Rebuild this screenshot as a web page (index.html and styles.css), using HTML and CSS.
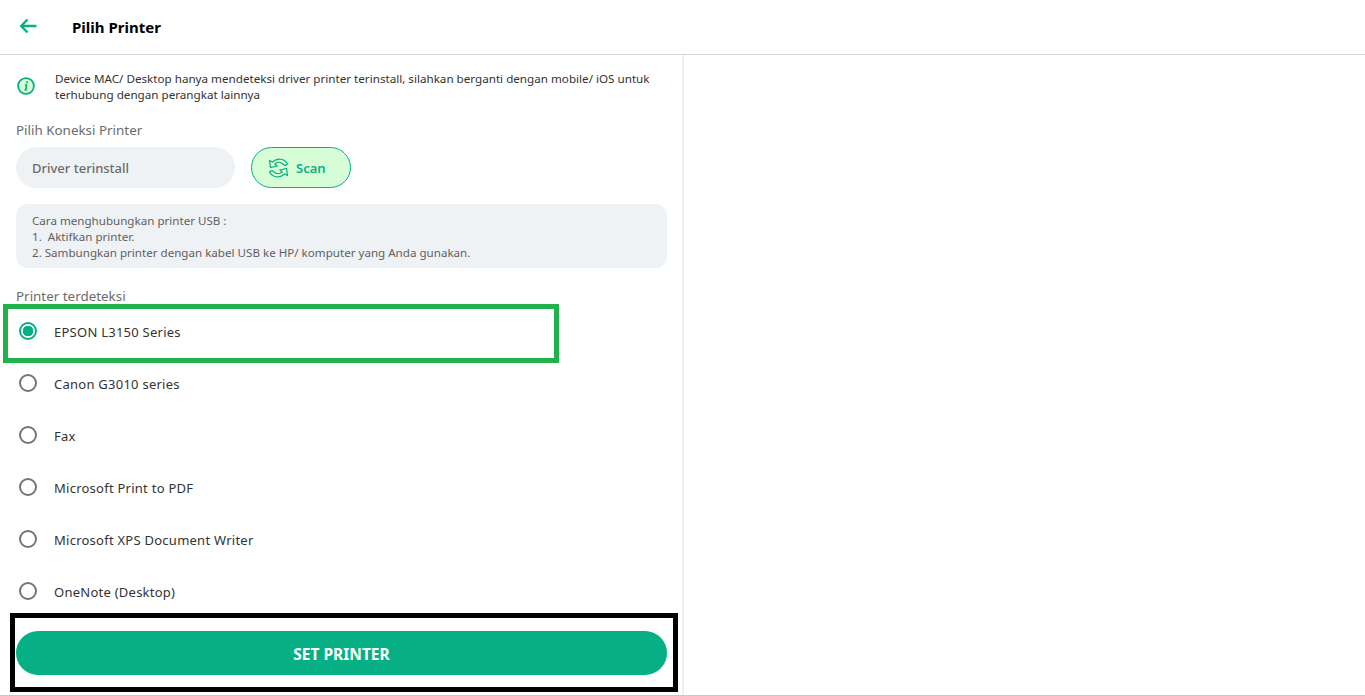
FILE: index.html
```html
<!DOCTYPE html>
<html lang="en">
<head>
  <meta charset="UTF-8" />
  <meta name="viewport" content="width=device-width, initial-scale=1.0"/>
  <title>Pilih Printer</title>
  <link rel="stylesheet" href="styles.css">
</head>
<body>
  <header class="topbar">
    <svg class="back-icon" width="18" height="16" viewBox="0 0 18 16" fill="none" stroke="#06b084" stroke-width="2.4">
      <path d="M17.5 8H2.5M8.5 1.5L2.2 8l6.3 6.5"/>
    </svg>
    <h1>Pilih Printer</h1>
  </header>

  <main class="layout">
    <section class="panel">
      <!-- Notice -->
      <div class="notice">
        <svg class="info-icon" width="18" height="18" viewBox="0 0 18 18">
          <circle cx="9" cy="9" r="7.9" fill="#d6fdd6" stroke="#06b084" stroke-width="1.8"/>
          <path d="M10 4.2v2M9.6 7.8L8.6 12.8M7.9 7.8h1.7M7.6 12.8h2.2" fill="none" stroke="#06b084" stroke-width="1.7"/>
        </svg>
        <p>Device MAC/ Desktop hanya mendeteksi driver printer terinstall, silahkan berganti dengan mobile/ iOS untuk terhubung dengan perangkat lainnya</p>
      </div>

      <div class="label connection-label">Pilih Koneksi Printer</div>
      <div class="connection">
        <div class="driver-pill">Driver terinstall</div>
        <button class="scan-btn">
          <svg width="22" height="22" viewBox="1 0 21 22" fill="none" stroke="#06b084" stroke-width="1.2">
            <path d="M2 3.5L3 10.5L9.5 9L7.3 7C9.5 5 13 4.8 15.5 7L17.5 8.5L20 7C17 1.5 10 .5 5 5Z"/>
            <path d="M2 3.5L3 10.5L9.5 9L7.3 7C9.5 5 13 4.8 15.5 7L17.5 8.5L20 7C17 1.5 10 .5 5 5Z" transform="rotate(180 11 11)"/>
          </svg>
          Scan
        </button>
      </div>

      <div class="howto">
        Cara menghubungkan printer USB :<br>
        1.&nbsp; Aktifkan printer.<br>
        2. Sambungkan printer dengan kabel USB ke HP/ komputer yang Anda gunakan.
      </div>

      <div class="label detected-label">Printer terdeteksi</div>
      <ul class="printer-list">
        <li class="printer selected"><span class="radio"></span><span class="printer-name">EPSON L3150 Series</span></li>
        <li class="printer"><span class="radio"></span><span class="printer-name">Canon G3010 series</span></li>
        <li class="printer"><span class="radio"></span><span class="printer-name">Fax</span></li>
        <li class="printer"><span class="radio"></span><span class="printer-name">Microsoft Print to PDF</span></li>
        <li class="printer"><span class="radio"></span><span class="printer-name">Microsoft XPS Document Writer</span></li>
        <li class="printer"><span class="radio"></span><span class="printer-name">OneNote (Desktop)</span></li>
      </ul>

      <button class="set-btn">SET PRINTER</button>

      <!-- Annotation boxes drawn over the screenshot -->
      <div class="mark mark-green"></div>
      <div class="mark mark-black"></div>
    </section>
  </main>
</body>
</html>
```

FILE: styles.css
```css
* {
  box-sizing: border-box;
}

html, body {
  height: 100%;
}

body {
  margin: 0;
  overflow: hidden;
  background: #fff;
  font-family: "Noto Sans", Arial, sans-serif;
  color: #2b2b2b;
  display: flex;
  flex-direction: column;
}

/* Header */
.topbar {
  display: flex;
  align-items: center;
  height: 55px;
  padding: 0 0 0 19px;
  border-bottom: 1px solid #d6d6d6;
  flex-shrink: 0;
}

.back-icon {
  margin-top: -3px;
}

.topbar h1 {
  margin: 0 0 0 35px;
  font-size: 15px;
  font-weight: 700;
  color: #000;
}

/* Page */
.layout {
  flex: 1;
  border-bottom: 1px solid #c8c8c8;
  min-height: 0;
}

.panel {
  position: relative;
  width: 684px;
  height: 100%;
  padding: 15px 16px 0;
  border-right: 2px solid #eeeeee;
}

/* Notice */
.notice {
  display: flex;
  align-items: center;
  padding-left: 1px;
  height: 33px;
}

.info-icon {
  flex-shrink: 0;
  margin-top: -1px;
}

.notice p {
  margin: 0 0 0 20px;
  font-size: 11.65px;
  line-height: 16px;
  color: #333;
}

/* Labels */
.label {
  font-size: 13.4px;
  line-height: 18px;
  color: #6b6b6b;
}

.connection-label {
  margin-top: 18px;
}

.detected-label {
  margin-top: 19px;
}

/* Connection row */
.connection {
  display: flex;
  gap: 16px;
  margin-top: 8px;
}

.driver-pill {
  display: flex;
  align-items: center;
  width: 219px;
  height: 41px;
  padding-left: 16px;
  border-radius: 21px;
  background: #eff2f5;
  font-size: 13px;
  font-weight: 500;
  color: #6b6b6b;
}

.scan-btn {
  display: flex;
  align-items: center;
  gap: 6px;
  width: 100px;
  height: 41px;
  padding: 0 0 0 16px;
  border: 1px solid #06b084;
  border-radius: 21px;
  background: #d6fdd6;
  font-family: inherit;
  font-size: 13px;
  font-weight: 600;
  color: #06b084;
}

/* How-to box */
.howto {
  width: 651px;
  height: 64px;
  margin-top: 16px;
  padding: 9px 16px 0;
  border-radius: 12px;
  background: #eff2f5;
  font-size: 11.6px;
  line-height: 16px;
  color: #5f5f5f;
}

/* Printer list */
.printer-list {
  list-style: none;
  margin: 0;
  padding: 0;
}

.printer {
  display: flex;
  align-items: center;
  height: 52px;
  padding-left: 3px;
  font-size: 13px;
  letter-spacing: 0.25px;
  color: #333;
}

.printer-name {
  padding-top: 2px;
}

.radio {
  width: 18px;
  height: 18px;
  margin-right: 17px;
  border: 2px solid #757575;
  border-radius: 50%;
  flex-shrink: 0;
}

.printer.selected .radio {
  border-color: #06b084;
  background: radial-gradient(circle, #06b084 0 5px, #fff 5.5px);
}

/* Submit */
.set-btn {
  display: block;
  width: 651px;
  height: 44px;
  margin-top: 14px;
  padding-top: 2px;
  border: none;
  border-radius: 22px;
  background: #06b084;
  font-family: inherit;
  font-size: 15.5px;
  font-weight: 700;
  color: #fff;
}

/* Annotations */
.mark {
  position: absolute;
  border-style: solid;
  border-width: 5px;
  pointer-events: none;
}

.mark-green {
  left: 3px;
  top: 249px;
  width: 556px;
  height: 59px;
  border-color: #22b14c;
}

.mark-black {
  left: 10px;
  top: 558px;
  width: 668px;
  height: 79px;
  border-color: #000;
}
```
